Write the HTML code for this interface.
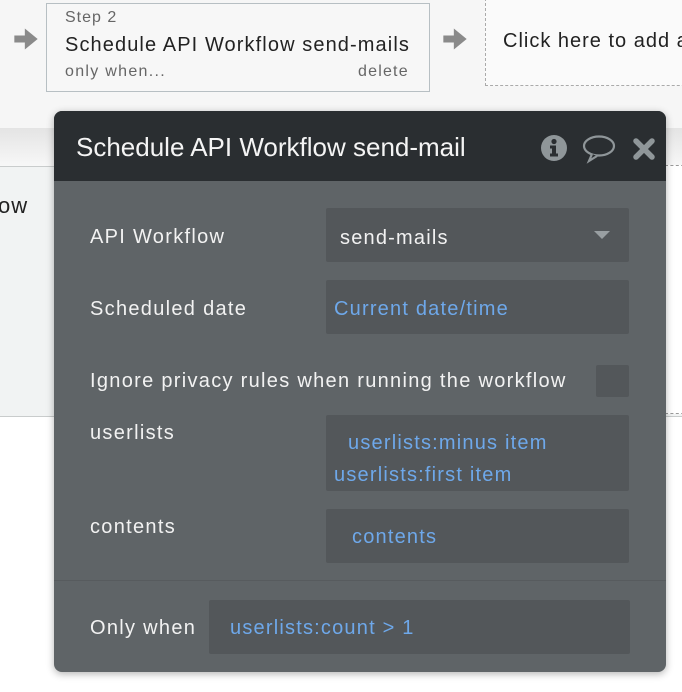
<!DOCTYPE html>
<html><head><style>
*{margin:0;padding:0;box-sizing:border-box}
body{width:682px;height:692px;overflow:hidden;background:#fff;font-family:"Liberation Sans",sans-serif;position:relative}
.a{position:absolute}
.lbl{position:absolute;color:#f2f2f2;font-size:20px;letter-spacing:1.3px;white-space:nowrap}
.box{position:absolute;background:#53575a;border-radius:2px}
.blue{color:#6ea8ea;font-size:20px;position:absolute;letter-spacing:1.2px;white-space:nowrap}
</style></head><body>
<div class="a" style="left:0;top:0;width:682px;height:128px;background:#f6f6f6"></div>
<div class="a" style="left:0;top:128px;width:682px;height:38px;background:linear-gradient(#e4e4e4,#f7f7f7)"></div>
<div class="a" style="left:0;top:166px;width:682px;height:251px;background:#f1f3f3;border-top:1px solid #c9cccc;border-bottom:1px solid #c9cccc"></div>
<div class="a" style="left:-2px;top:193px;font-size:22px;color:#222;letter-spacing:1px">ow</div>
<div class="a" style="left:665px;top:165px;width:30px;height:249px;border:1px dashed #999;background:#fff"></div>
<div class="a" style="left:485px;top:-2px;width:220px;height:88px;border:1px dashed #aaa;background:#fafafa"></div>
<div class="a" style="left:503px;top:30px;font-size:20px;color:#222;white-space:nowrap;letter-spacing:1px">Click here to add a</div>
<svg class="a" style="left:12px;top:24px" width="28" height="30" viewBox="0 0 24 24"><path d="M2 9h9V3l11 9-11 9v-6H2z" fill="#8a8a8a"/></svg>
<svg class="a" style="left:441px;top:24px" width="28" height="30" viewBox="0 0 24 24"><path d="M2 9h9V3l11 9-11 9v-6H2z" fill="#8a8a8a"/></svg>
<div class="a" style="left:46px;top:3px;width:384px;height:89px;border:1px solid #b7bfc3;background:#f7f7f7"></div>
<div class="a" style="left:65px;top:9px;font-size:16px;color:#666;letter-spacing:1px">Step 2</div>
<div class="a" style="left:65px;top:34px;font-size:20px;color:#222;white-space:nowrap;letter-spacing:1.1px">Schedule API Workflow send-mails</div>
<div class="a" style="left:65px;top:63px;font-size:16px;color:#666;letter-spacing:1.3px">only when...</div>
<div class="a" style="left:358px;top:63px;font-size:16px;color:#666;letter-spacing:1.2px">delete</div>

<div class="a" style="left:54px;top:111px;width:612px;height:561px;background:#5f6467;border-radius:8px;overflow:hidden;box-shadow:0 2px 8px rgba(0,0,0,.3)">
<div class="a" style="left:0;top:0;width:612px;height:70px;background:#2a2e31"></div>
<div class="a" style="left:22px;top:21px;font-size:26px;color:#f4f4f4;white-space:nowrap">Schedule API Workflow send-mail</div>
<svg class="a" style="left:486px;top:23px" width="28" height="28" viewBox="0 0 28 28"><circle cx="14" cy="14" r="13" fill="#8f9699"/><circle cx="14" cy="7.5" r="2.6" fill="#2a2e31"/><path d="M10 11.5h6v8h2v3H10v-3h2v-5h-2z" fill="#2a2e31"/></svg>
<svg class="a" style="left:528px;top:23px" width="34" height="30" viewBox="0 0 34 30"><ellipse cx="17" cy="12" rx="15" ry="9.5" fill="none" stroke="#8f9699" stroke-width="2.2"/><path d="M10 20l-3 7 8-5" fill="#2a2e31" stroke="#8f9699" stroke-width="2.2"/></svg>
<svg class="a" style="left:578px;top:26px" width="24" height="24" viewBox="0 0 24 24"><path d="M4 4L20 20M20 4L4 20" stroke="#8f9699" stroke-width="5.5" stroke-linecap="round"/></svg>
</div>
<div class="lbl" style="left:90px;top:226px">API Workflow</div>
<div class="box" style="left:326px;top:208px;width:303px;height:54px"></div>
<div class="a" style="left:340px;top:227px;font-size:20px;color:#f2f2f2;letter-spacing:1.2px">send-mails</div>
<svg class="a" style="left:594px;top:231px" width="16" height="9"><path d="M0 0h16L8 8z" fill="#999fa2"/></svg>
<div class="lbl" style="left:90px;top:298px">Scheduled date</div>
<div class="box" style="left:326px;top:280px;width:303px;height:54px"></div>
<div class="blue" style="left:334px;top:298px">Current date/time</div>
<div class="lbl" style="left:90px;top:370px">Ignore privacy rules when running the workflow</div>
<div class="box" style="left:596px;top:365px;width:33px;height:32px"></div>
<div class="lbl" style="left:90px;top:422px">userlists</div>
<div class="box" style="left:326px;top:415px;width:303px;height:76px"></div>
<div class="blue" style="left:348px;top:432px">userlists:minus item</div>
<div class="blue" style="left:334px;top:464px">userlists:first item</div>
<div class="lbl" style="left:90px;top:516px">contents</div>
<div class="box" style="left:326px;top:509px;width:303px;height:54px"></div>
<div class="blue" style="left:352px;top:526px">contents</div>
<div class="a" style="left:54px;top:580px;width:612px;height:1px;background:#575b5e"></div>
<div class="lbl" style="left:90px;top:617px">Only when</div>
<div class="box" style="left:209px;top:600px;width:421px;height:54px"></div>
<div class="blue" style="left:230px;top:617px">userlists:count &gt; 1</div>
</body></html>
